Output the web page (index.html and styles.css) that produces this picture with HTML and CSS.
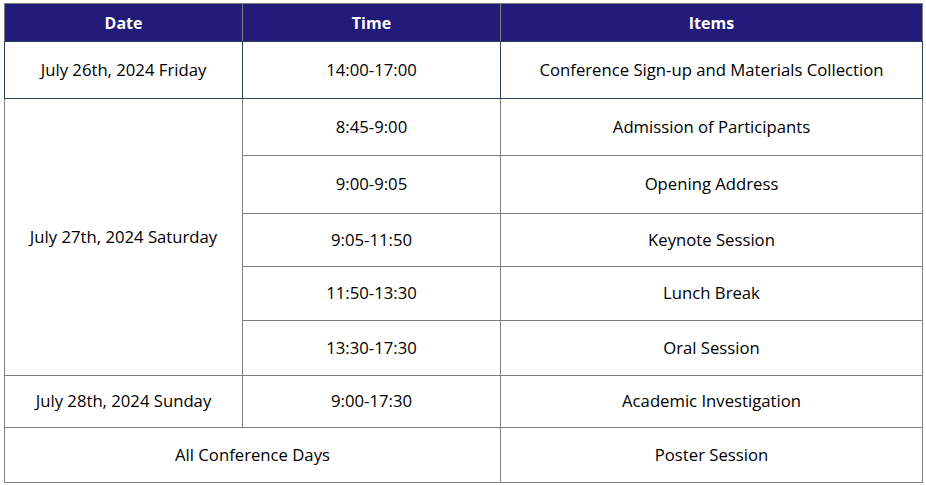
FILE: index.html
```html
<!DOCTYPE html>
<html>
<head>
<meta charset="utf-8">
<link rel="stylesheet" href="styles.css">
</head>
<body>
<table class="sched">
  <colgroup>
    <col class="c-date">
    <col class="c-time">
    <col class="c-items">
  </colgroup>
  <thead>
    <tr class="r-head"><th>Date</th><th>Time</th><th>Items</th></tr>
  </thead>
  <tbody>
    <tr class="r-first h57"><td>July 26th, 2024 Friday</td><td>14:00-17:00</td><td>Conference Sign-up and Materials Collection</td></tr>
    <tr class="h57"><td rowspan="5">July 27th, 2024 Saturday</td><td>8:45-9:00</td><td>Admission of Participants</td></tr>
    <tr class="h58"><td>9:00-9:05</td><td>Opening Address</td></tr>
    <tr class="h53"><td>9:05-11:50</td><td>Keynote Session</td></tr>
    <tr class="h54"><td>11:50-13:30</td><td>Lunch Break</td></tr>
    <tr class="h55"><td>13:30-17:30</td><td>Oral Session</td></tr>
    <tr class="h52"><td>July 28th, 2024 Sunday</td><td>9:00-17:30</td><td>Academic Investigation</td></tr>
    <tr class="h55"><td colspan="2">All Conference Days</td><td>Poster Session</td></tr>
  </tbody>
</table>
</body>
</html>
```
FILE: styles.css
```css
html, body { margin: 0; padding: 0; background: #fff; }
body { padding: 3px 0 0 4px; }
.sched {
  border-collapse: collapse;
  table-layout: fixed;
  width: 918px;
  font-family: "Open Sans", "Noto Sans", sans-serif;
  font-size: 16.7px;
  color: #000;
}
.c-date { width: 238px; }
.c-time { width: 258px; }
.c-items { width: 422px; }
.sched th, .sched td {
  border: 1px solid #7f7f7f;
  text-align: center;
  vertical-align: middle;
  padding: 0 0 2px 0;
}
.sched th {
  background: #231b79;
  color: #fff;
  font-weight: 700;
  font-size: 16px;
  height: 37px;
  padding: 0;
}
.r-first td { border-color: #2e4057; }
.r-head th { border-bottom-color: #2e4057; }
.h57 td { height: 54px; }
.h58 td { height: 55px; }
.h53 td { height: 50px; }
.h54 td { height: 51px; }
.h55 td { height: 52px; }
.h52 td { height: 49px; }
```
